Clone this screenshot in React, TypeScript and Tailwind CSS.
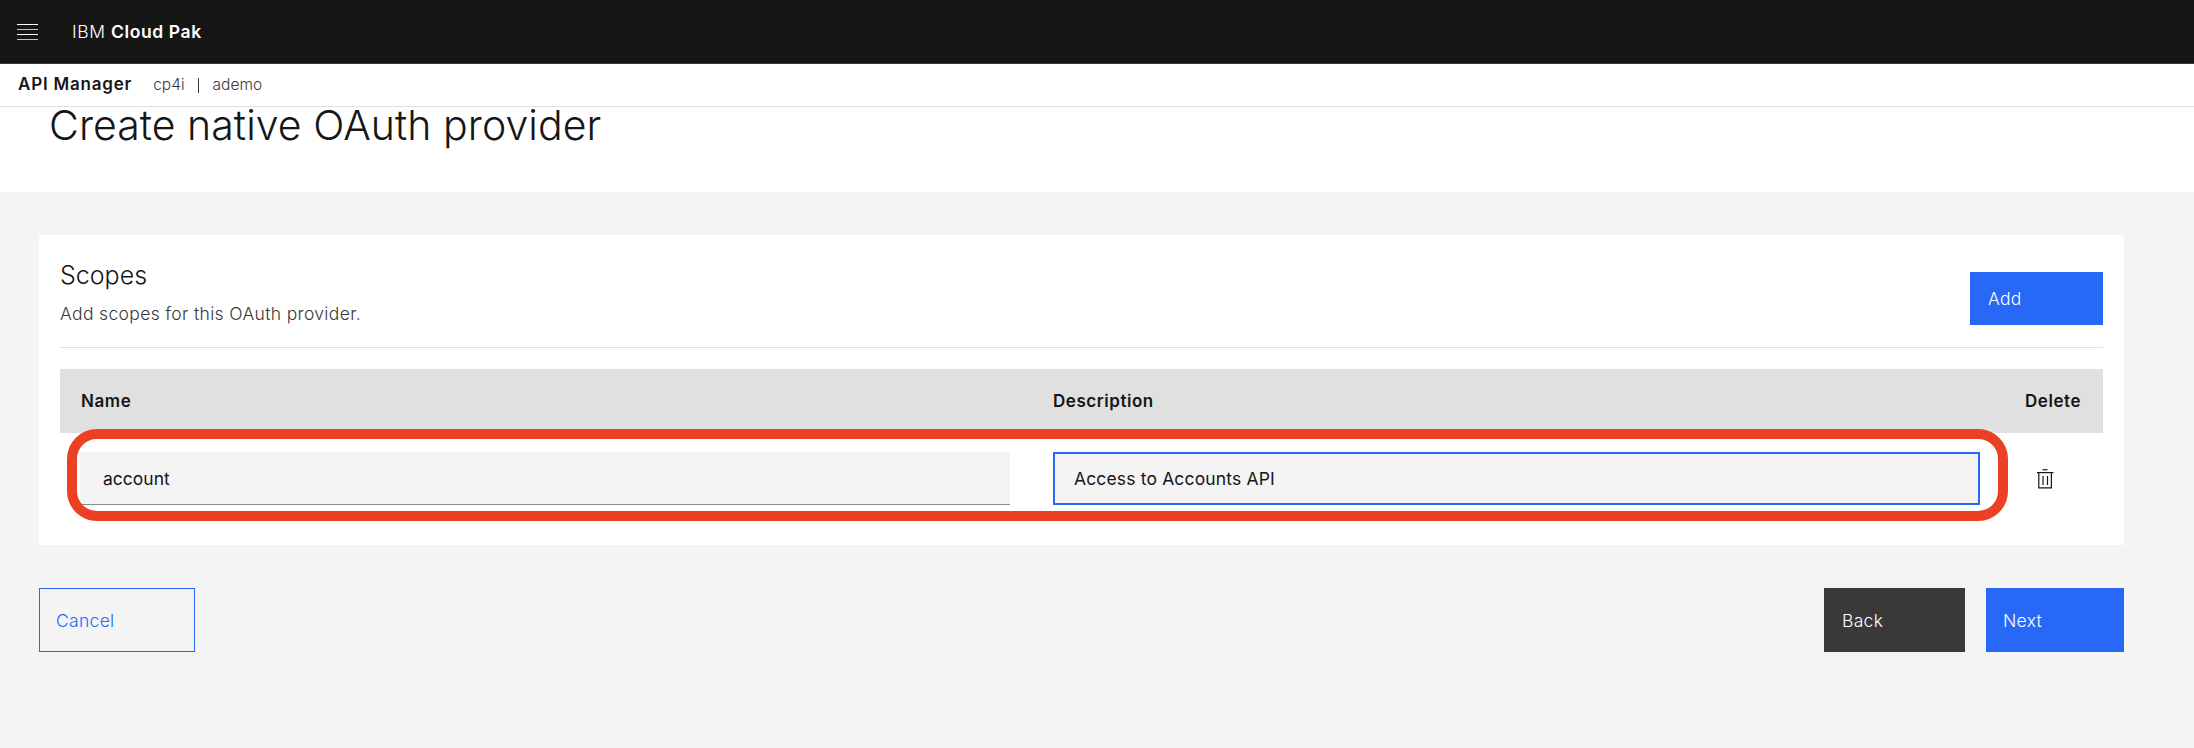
import React from "react";

function Trash() {
  return (
    <svg width="17" height="20" viewBox="0 0 17 20" fill="none" stroke="#161616" strokeWidth="1.2" className="block">
      <path d="M0 3.6H16.5" />
      <path d="M1.8 3.6V18.9H14.4V3.6" />
      <path d="M6 7V16M10.5 7V16" />
      <path d="M5.5 .7H10.5" strokeWidth="1.4" stroke="#393939" />
    </svg>
  );
}

export default function App() {
  return (
    <div className="h-[748px] w-[2194px] overflow-hidden bg-[#f4f4f4] font-['Inter',sans-serif] text-[#161616]">
      <header className="flex h-[64px] items-center border-b border-[#393939] bg-[#161616] pl-[17px] text-white">
        <div className="flex w-[21px] flex-col gap-[4px]">
          <span className="h-[1px] bg-white" />
          <span className="h-[1px] bg-[#c6c6c6]" />
          <span className="h-[1px] bg-white" />
          <span className="h-[1px] bg-[#c6c6c6]" />
        </div>
        <div className="ml-[34px] text-[17.5px] leading-[20px] tracking-[0.6px]">
          <span className="font-light">IBM </span>
          <span className="font-semibold">Cloud Pak</span>
        </div>
      </header>
      <div className="flex h-[43px] items-center border-b border-[#e0e0e0] bg-white pl-[18px]">
        <span className="text-[17px] font-semibold tracking-[0.8px]">API Manager</span>
        <span className="ml-[21px] text-[15.5px] font-light text-[#393939]">cp4i</span>
        <span className="ml-[13px] h-[15px] w-px bg-[#393939]" />
        <span className="ml-[14px] text-[15.5px] font-light text-[#393939]">ademo</span>
      </div>
      <div className="h-[85px] bg-white pl-[49px]">
        <h1 className="text-[41px] font-light leading-[36px] tracking-[0.05px]">Create native OAuth provider</h1>
      </div>
      <main className="px-[39px] pt-[43px]">
        <section className="h-[310px] w-[2085px] bg-white px-[21px]">
          <div className="flex h-[113px] items-start justify-between border-b border-[#e0e0e0]">
            <div className="pt-[24px]">
              <h2 className="text-[25px] font-light leading-[32px]">Scopes</h2>
              <p className="mt-[11px] text-[17.5px] font-light leading-[24px] tracking-[0.35px] text-[#393939]">Add scopes for this OAuth provider.</p>
            </div>
            <button className="mt-[37px] flex h-[53px] w-[133px] items-center bg-[#2768f6] pl-[18px] pt-[2px] text-left text-[17.5px] font-light tracking-[0.2px] text-white">Add</button>
          </div>
          <div className="mt-[21px] flex h-[64px] items-center bg-[#e0e0e0] pt-[2px] text-[17px] font-semibold tracking-[0.55px]">
            <span className="w-[993px] pl-[21px]">Name</span>
            <span className="flex-1">Description</span>
            <span className="pr-[22px]">Delete</span>
          </div>
          <div className="relative flex items-center pt-[19px]">
            <div className="ml-[20px] flex h-[53px] w-[930px] items-center border-b border-[#8d8d8d] bg-[#f4f4f4] pl-[23px] pt-[2px] text-[17.5px]">account</div>
            <div className="ml-[43px] flex h-[53px] w-[927px] items-center border-2 border-[#2768f6] bg-[#f4f4f4] pl-[19px] pt-[1px] text-[17.5px] tracking-[0.15px]">Access to Accounts API</div>
            <div className="ml-[57px]"><Trash /></div>
            <div className="pointer-events-none absolute left-[7px] top-[-4px] h-[92px] w-[1941px] rounded-[30px] border-[10px] border-[#ec4024]" />
          </div>
        </section>
        <div className="mt-[43px] flex w-[2085px] justify-between">
          <button className="flex h-[64px] w-[156px] items-center border border-[#2768f6] pl-[16px] pt-[3px] text-[17.5px] font-light tracking-[0.3px] text-[#2768f6]">Cancel</button>
          <div className="flex gap-[21px]">
            <button className="flex h-[64px] w-[141px] items-center bg-[#393939] pl-[18px] pt-[3px] text-[17.5px] font-light tracking-[0.3px] text-white">Back</button>
            <button className="flex h-[64px] w-[138px] items-center bg-[#2768f6] pl-[17px] pt-[3px] text-[17.5px] font-light tracking-[0.3px] text-white">Next</button>
          </div>
        </div>
      </main>
    </div>
  );
}
